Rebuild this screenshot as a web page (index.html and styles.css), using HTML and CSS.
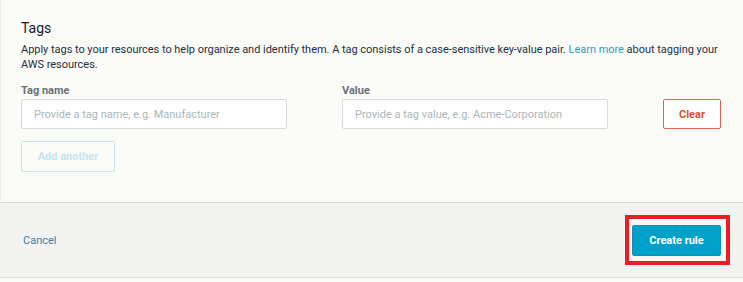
FILE: index.html
```html
<!DOCTYPE html>
<html>
<head>
<meta charset="utf-8">
<link rel="stylesheet" href="styles.css">
</head>
<body>
<div class="panel">
  <h2 class="title">Tags</h2>
  <p class="desc">Apply tags to your resources to help organize and identify them. A tag consists of a case-sensitive key-value pair. <a class="link" href="#">Learn more</a> about tagging your<br>AWS resources.</p>
  <div class="row">
    <div class="field">
      <label class="label">Tag name</label>
      <input class="input" type="text" placeholder="Provide a tag name, e.g. Manufacturer">
    </div>
    <div class="field">
      <label class="label">Value</label>
      <input class="input" type="text" placeholder="Provide a tag value, e.g. Acme-Corporation">
    </div>
    <button class="btn btn-clear">Clear</button>
  </div>
  <button class="btn btn-add" disabled>Add another</button>
</div>
<div class="footer">
  <a class="cancel" href="#">Cancel</a>
  <div class="highlight">
    <button class="btn btn-primary">Create rule</button>
  </div>
</div>
</body>
</html>
```

FILE: styles.css
```css
* { box-sizing: border-box; }
html, body { margin: 0; padding: 0; }
body {
  width: 743px;
  height: 282px;
  background: #fafaf8;
  font-family: Roboto, "Noto Sans", sans-serif;
  color: #16191f;
  overflow: hidden;
}
.panel {
  height: 203px;
  background: #fbfcf8;
  border-left: 1px solid #ecede9;
  border-bottom: 1px solid #d5d6d2;
  padding: 19px 20px 0 20px;
}
.title {
  margin: 0;
  font-size: 14px;
  font-weight: 400;
  line-height: 18px;
  color: #16191f;
}
.desc {
  margin: 5px 0 0 0;
  font-size: 11px;
  line-height: 15px;
  letter-spacing: -0.03px;
  color: #232f3e;
  white-space: nowrap;
}
.link { color: #2ca0c6; text-decoration: none; }
.row {
  display: flex;
  align-items: flex-end;
  margin-top: 12px;
}
.field {
  display: flex;
  flex-direction: column;
  width: 266px;
  margin-right: 55px;
}
.label {
  font-size: 11px;
  font-weight: 700;
  line-height: 14px;
  color: #687078;
  margin-bottom: 1px;
}
.input {
  height: 30px;
  border: 1px solid #d5dbdb;
  border-radius: 2px;
  background: #ffffff;
  padding: 0 12px;
  font-family: inherit;
  font-size: 11px;
}
.input::placeholder { color: #aab7b8; }
.btn {
  font-family: inherit;
  font-size: 11px;
  font-weight: 700;
  border-radius: 2px;
  height: 31px;
  padding: 0 15px;
  cursor: pointer;
}
.btn-clear {
  width: 58px;
  height: 30px;
  background: #fff;
  border: 1px solid #d6694f;
  color: #d4512e;
  padding: 0;
}
.btn-add {
  margin-top: 12px;
  width: 94px;
  background: #fbfcf8;
  border: 1px solid #c8e8f0;
  color: #c3e5ef;
  padding: 0;
}
.footer {
  height: 75px;
  background: #f2f3f0;
  border-bottom: 1px solid #dcdcd8;
  display: flex;
  align-items: center;
  justify-content: space-between;
  padding: 0 13px 0 23px;
}
.cancel {
  font-size: 11px;
  color: #3a7fb5;
  text-decoration: none;
}
.highlight {
  border: 4px solid #ec1c24;
  padding: 6px 5px 5px 3px;
  background: #f7f8f5;
}
.btn-primary {
  display: block;
  width: 89px;
  background: #00a1c9;
  border: 1px solid #0a95b8;
  color: #ffffff;
  padding: 0;
}
```
